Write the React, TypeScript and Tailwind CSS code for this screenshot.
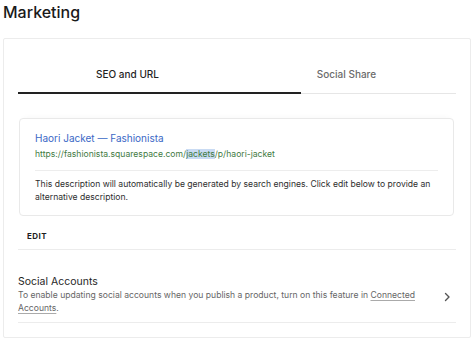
import React, { useState } from "react";

const font = { fontFamily: "Inter, 'Noto Sans', sans-serif" };

const ChevronRight: React.FC = () => (
  <svg width="7" height="10" viewBox="0 0 7 10" fill="none">
    <path d="M1.5 1.5L5 5L1.5 8.5" stroke="#555" strokeWidth="1.4" strokeLinecap="round" strokeLinejoin="round" />
  </svg>
);

export default function App() {
  const [tab, setTab] = useState<"seo" | "social">("seo");

  return (
    <div className="w-[474px] h-[340px] bg-white px-[3px] overflow-hidden" style={font}>
      <h1 className="h-[24px] text-[16px] leading-[24px] font-medium text-[#1a1a1a]">Marketing</h1>

      <div className="mt-[14px] border border-[#ececec] rounded-[2px] px-[14px] pt-[16px] pb-[14px]">
        {/* tabs */}
        <div className="relative flex border-b border-[#e6e6e6]">
          <button
            onClick={() => setTab("seo")}
            className="flex-1 h-[38px] flex items-center justify-center text-[10px] font-medium text-[#1f1f1f]"
          >
            SEO and URL
          </button>
          <button
            onClick={() => setTab("social")}
            className="flex-1 h-[38px] flex items-center justify-center text-[10px] font-medium text-[#6b6b6b]"
          >
            Social Share
          </button>
          <div
            className={`absolute bottom-[-1px] h-[2px] w-[283px] bg-[#222] ${tab === "seo" ? "left-0" : "right-0"}`}
          />
        </div>

        {/* search preview */}
        <div className="mt-[24px] ml-[1px] mr-[2px] border border-[#e9e9e9] rounded-[4px] px-[15px] pt-[12px] pb-[11px] shadow-[0_-4px_6px_-4px_rgba(0,0,0,0.04)]">
          <div className="text-[10px] leading-[14px] text-[#3b68c6]">Haori Jacket — Fashionista</div>
          <div className="mt-[2px] text-[8.6px] leading-[14px] text-[#3f7a3f]">
            https://fashionista.squarespace.com/
            <span className="bg-[#c9dbf3]">jackets</span>
            /p/haori-jacket
          </div>
          <div className="mt-[9px] border-t border-[#ededed]" />
          <p className="mt-[7px] text-[8.6px] leading-[13px] text-[#2e2e2e]">
            This description will automatically be generated by search engines. Click edit below to provide an
            alternative description.
          </p>
        </div>

        <div className="mt-[13px] pl-[9px] h-[14px] flex items-center text-[8px] font-bold tracking-[0.06em] text-[#1f1f1f]">
          EDIT
        </div>
        <div className="mt-[6px] border-t border-[#ececec]" />

        {/* social accounts */}
        <div className="flex items-center pt-[25px] pb-[7px] border-b border-[#ececec]">
          <div className="flex-1 pr-[20px]">
            <div className="text-[10.5px] leading-[14px] text-[#1f1f1f]">Social Accounts</div>
            <p className="text-[8.6px] leading-[13px] text-[#666]">
              To enable updating social accounts when you publish a product, turn on this feature in{" "}
              <span className="underline decoration-[#aaa] underline-offset-[1.5px]">Connected Accounts</span>.
            </p>
          </div>
          <div className="pr-[5px] pt-[4px]">
            <ChevronRight />
          </div>
        </div>
      </div>
    </div>
  );
}
